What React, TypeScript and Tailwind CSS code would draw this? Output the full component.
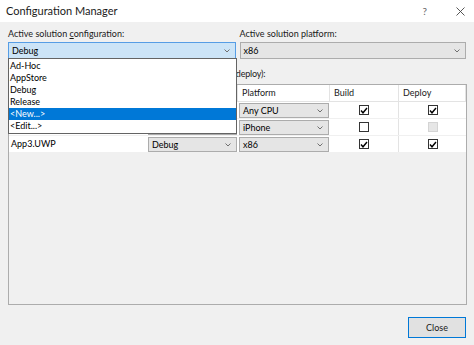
import React from 'react';

const Chevron: React.FC = () => (
  <svg width="6" height="4" viewBox="0 0 6 4" className="shrink-0">
    <path d="M0.5 0.5 L3 3 L5.5 0.5" fill="none" stroke="#707070" strokeWidth="1" />
  </svg>
);

interface ComboProps {
  value: string;
  focused?: boolean;
  className?: string;
}

const Combo: React.FC<ComboProps> = ({ value, focused, className }) => (
  <div
    className={
      'flex items-center justify-between pl-[3px] pr-[5px] border ' +
      (focused ? 'bg-[#cce4f7] border-[#569de5] ' : 'bg-[#e5e5e5] border-[#acacac] ') +
      (className || '')
    }
  >
    <span className="leading-none">{value}</span>
    <Chevron />
  </div>
);

const CheckBox: React.FC<{ checked?: boolean; disabled?: boolean }> = ({ checked, disabled }) => (
  <div
    className={
      'w-[10px] h-[10px] border flex items-center justify-center ' +
      (disabled ? 'bg-[#e6e6e6] border-[#d4d4d4]' : 'bg-white border-[#333333]')
    }
  >
    {checked && (
      <svg width="8" height="7" viewBox="0 0 8 7">
        <path d="M1 3.5 L3 5.8 L7 1" fill="none" stroke="#000" strokeWidth="1.4" />
      </svg>
    )}
  </div>
);

const rows = [
  { project: 'App3.Droid', config: 'Debug', platform: 'Any CPU', build: true, deploy: true, deployDisabled: false },
  { project: 'App3.iOS', config: 'Debug', platform: 'iPhone', build: false, deploy: false, deployDisabled: true },
  { project: 'App3.UWP', config: 'Debug', platform: 'x86', build: true, deploy: true, deployDisabled: false },
];

const menuItems = ['Ad-Hoc', 'AppStore', 'Debug', 'Release', '<New...>', '<Edit...>'];

const cols = 'grid grid-cols-[138px_91px_92px_69px_1fr]';

export default function App() {
  return (
    <div
      className="w-[474px] h-[345px] bg-[#f0f0f0] flex flex-col text-[9px] text-black overflow-hidden"
      style={{ fontFamily: '"Segoe UI", Lato, "Noto Sans", sans-serif' }}
    >
      {/* title bar */}
      <div className="h-[22px] bg-white flex items-center pl-[6px] pr-[9px] shrink-0 text-[11px]">
        <span className="flex-1 text-[#1a1a1a]">Configuration Manager</span>
        <span className="text-[#666] text-[10px] mr-[29px]">?</span>
        <svg width="9" height="9" viewBox="0 0 9 9">
          <path d="M0.5 0.5 L8.5 8.5 M8.5 0.5 L0.5 8.5" stroke="#444" strokeWidth="0.9" />
        </svg>
      </div>

      <div className="relative flex-1 flex flex-col px-[8px] pt-[5px]">
        {/* solution config / platform */}
        <div className="flex gap-[4px]">
          <div className="relative w-[228px] flex flex-col">
            <span className="h-[14px] leading-[14px] mb-[1px] text-[#1a1a1a]">
              Active solution <span className="underline">c</span>onfiguration:
            </span>
            <Combo value="Debug" focused className="h-[17px]" />
            {/* open dropdown list */}
            <div className="absolute left-0 top-[31px] w-[229px] bg-white border border-[#646464] py-[1px] z-10">
              {menuItems.map((m) => (
                <div
                  key={m}
                  className={
                    'h-[12px] leading-[12px] pl-[1px] ' +
                    (m === '<New...>' ? 'bg-[#0078d7] text-white' : 'text-black')
                  }
                >
                  {m}
                </div>
              ))}
            </div>
          </div>
          <div className="w-[227px] flex flex-col">
            <span className="h-[14px] leading-[14px] mb-[1px] text-[#1a1a1a]">Active solution platform:</span>
            <Combo value="x86" className="h-[17px]" />
          </div>
        </div>

        <div className="mt-[9px] h-[12px] leading-[12px] text-[#1a1a1a] tracking-[-0.2px]">
          Project contexts (check the project configurations to build or deploy):
        </div>

        {/* project grid */}
        <div className="mt-[4px] w-[459px] h-[221px] border border-[#acacac] bg-[#f0f0f0]">
          <div className={cols + ' h-[17px] bg-white border-b border-[#e3e3e3] text-[#1a1a1a]'}>
            {['Project', 'Configuration', 'Platform', 'Build', 'Deploy'].map((h) => (
              <div key={h} className="pl-[4px] leading-[16px] border-r border-[#e3e3e3]">
                {h}
              </div>
            ))}
          </div>
          {rows.map((r) => (
            <div key={r.project} className={cols + ' h-[17px] bg-white border-b border-[#f0f0f0]'}>
              <div className="pl-[2px] leading-[16px]">{r.project}</div>
              <div className="pl-[1px] pt-[1px]">
                <Combo value={r.config} className="h-[15px] w-[89px]" />
              </div>
              <div className="pl-[1px] pt-[1px]">
                <Combo value={r.platform} className="h-[15px] w-[90px]" />
              </div>
              <div className="flex items-center justify-center border-r border-[#e3e3e3]">
                <CheckBox checked={r.build} />
              </div>
              <div className="flex items-center justify-center">
                <CheckBox checked={r.deploy} disabled={r.deployDisabled} />
              </div>
            </div>
          ))}
        </div>

        <div className="flex justify-end mt-[12px]">
          <button className="w-[58px] h-[21px] border border-[#0078d7] bg-[#e1e1e1] text-[#1a1a1a] leading-none">
            Close
          </button>
        </div>
      </div>
    </div>
  );
}
